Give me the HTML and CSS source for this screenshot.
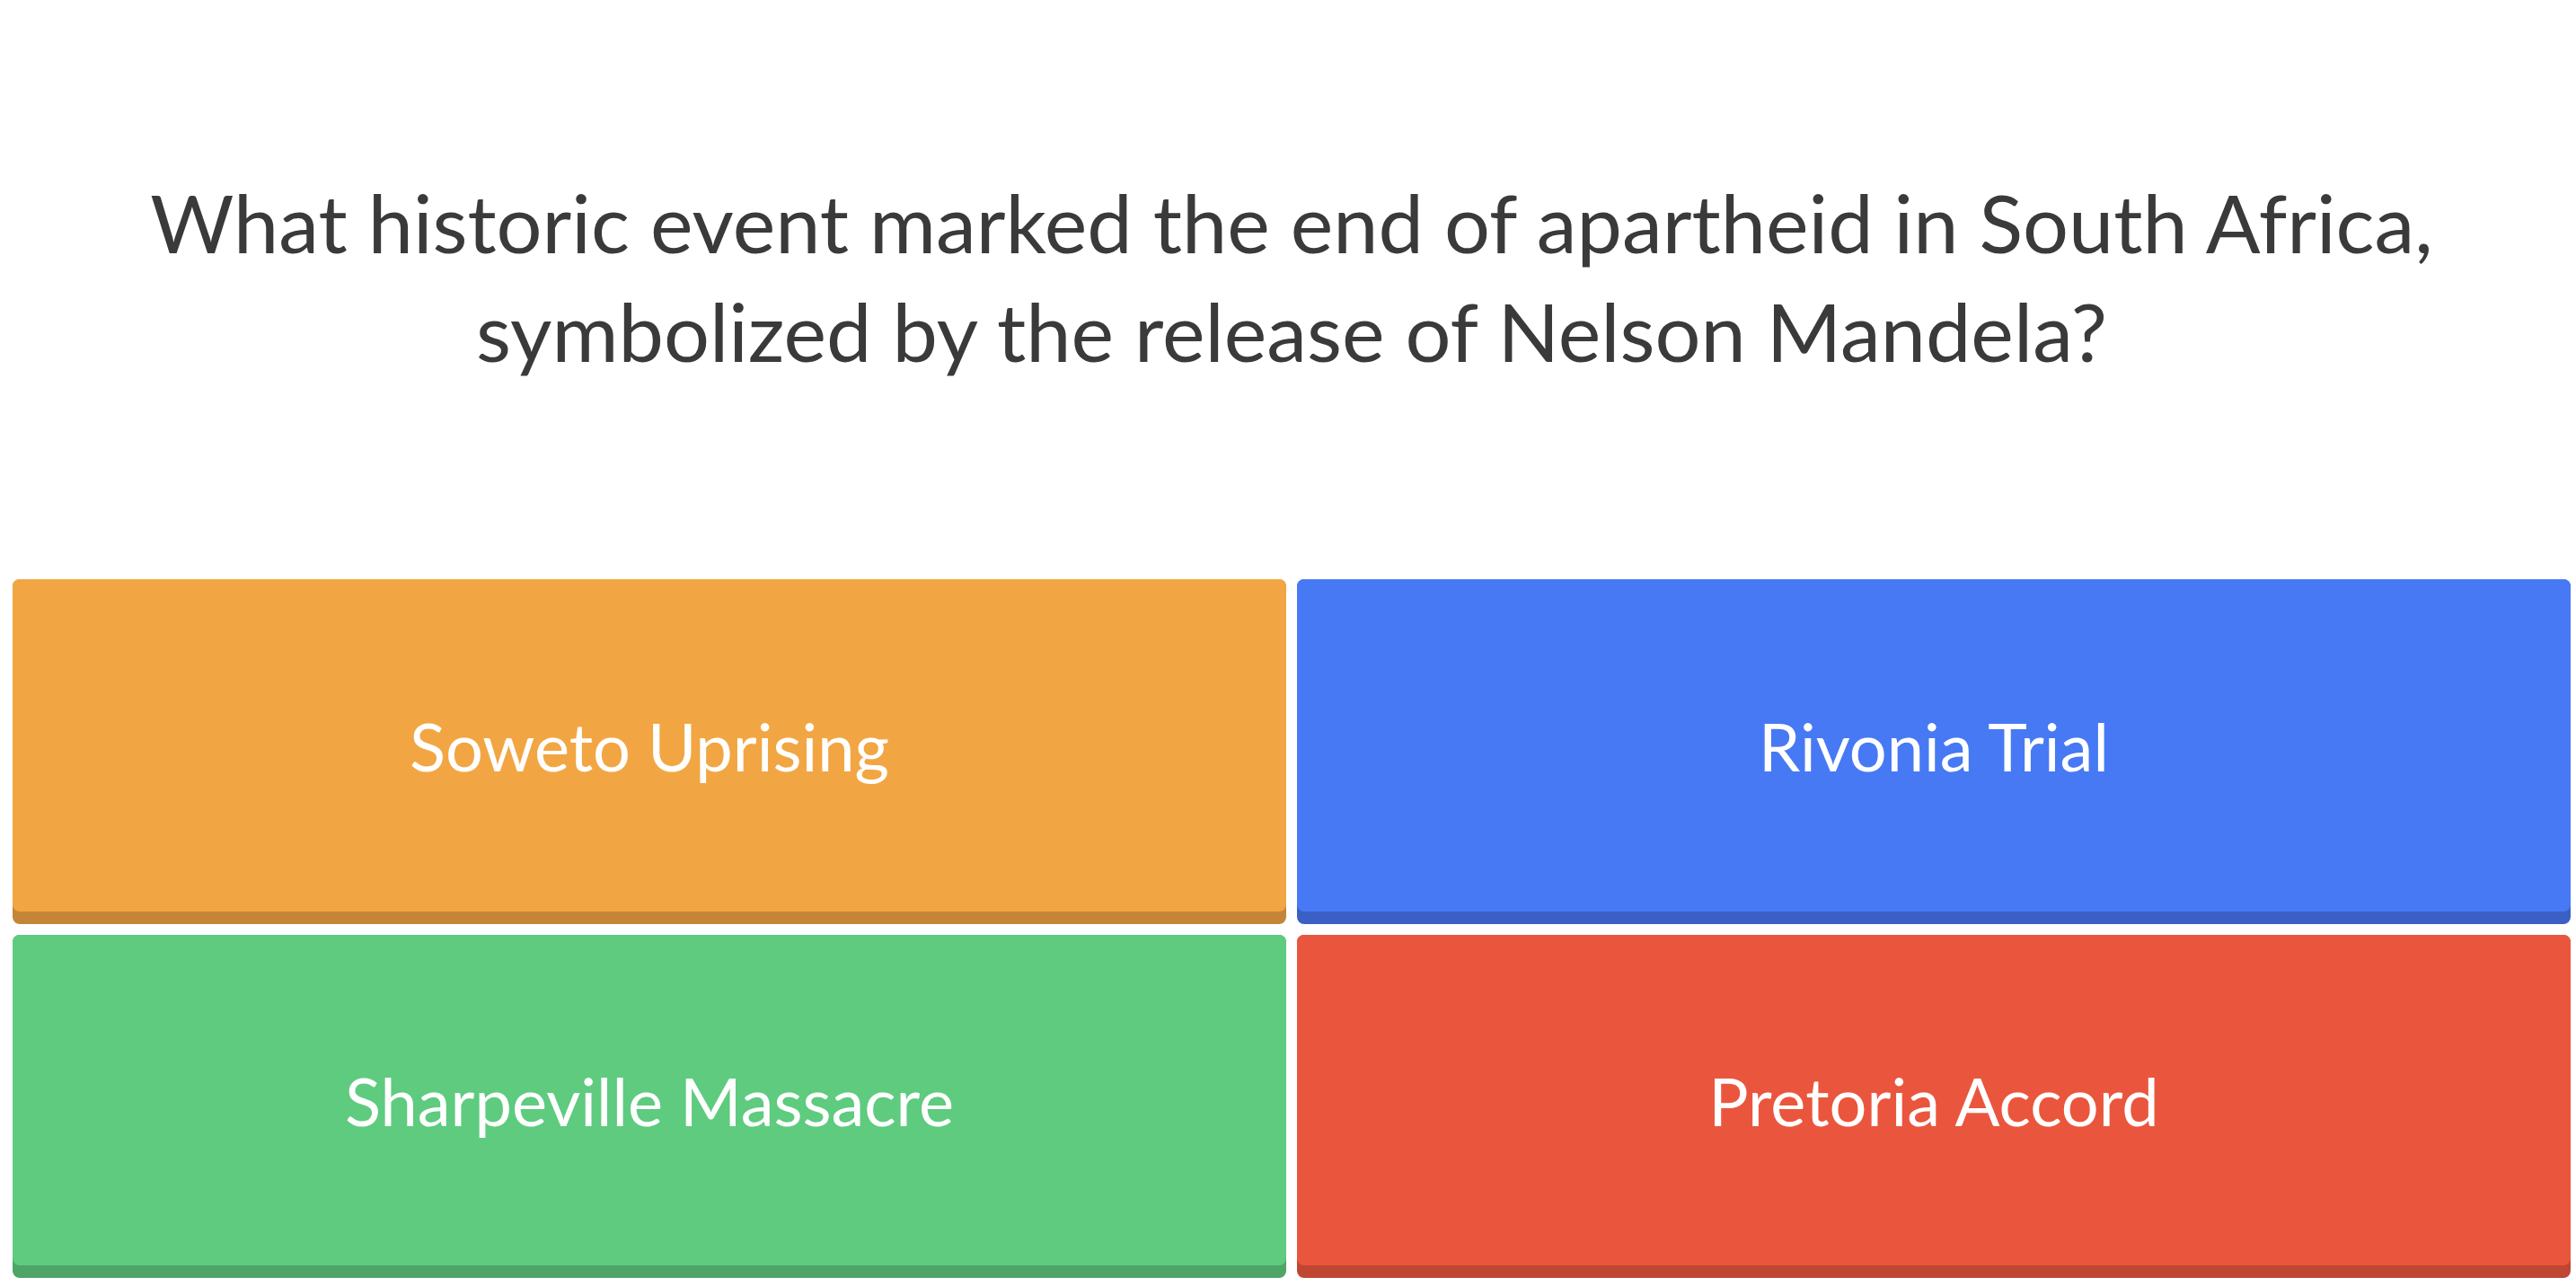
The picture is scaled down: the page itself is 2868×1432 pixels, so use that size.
FILE: index.html
```html
<!DOCTYPE html>
<html lang="en">
<head>
<meta charset="utf-8">
<title>Quiz</title>
<link rel="stylesheet" href="styles.css">
</head>
<body>
<div class="page">
  <header class="question">
    <h1 class="question-text">What historic event marked the end of apartheid in South Africa,<br>symbolized by the release of Nelson Mandela?</h1>
  </header>
  <main class="answers">
    <button class="answer orange"><span class="face">Soweto Uprising</span></button>
    <button class="answer blue"><span class="face">Rivonia Trial</span></button>
    <button class="answer green"><span class="face">Sharpeville Massacre</span></button>
    <button class="answer red"><span class="face">Pretoria Accord</span></button>
  </main>
</div>
</body>
</html>
```

FILE: styles.css
```css
* { box-sizing: border-box; }
html, body {
  margin: 0;
  padding: 0;
  background: #ffffff;
}
body {
  font-family: "Lato", "Noto Sans", sans-serif;
  width: 2868px;
  height: 1432px;
  overflow: hidden;
}
.page {
  height: 1432px;
  padding: 0 6px 9px 14px;
  display: grid;
  grid-template-rows: 645px 1fr;
}
.question {
  display: flex;
  align-items: center;
  justify-content: center;
  padding-bottom: 30px;
}
.question-text {
  margin: 0;
  font-weight: 400;
  font-size: 90px;
  line-height: 121px;
  color: #3a3a3a;
  text-align: center;
}
.answers {
  display: grid;
  grid-template-columns: 1fr 1fr;
  grid-template-rows: 384px 1fr;
  gap: 12px;
}
.answer {
  border: 0;
  margin: 0;
  padding: 0 0 14px 0;
  border-radius: 8px;
  display: flex;
  font-family: inherit;
  cursor: pointer;
}
.face {
  flex: 1;
  border-radius: 8px;
  display: flex;
  align-items: center;
  justify-content: center;
  color: #ffffff;
  font-size: 74px;
  font-weight: 400;
}
.orange { background: #c48538; }
.orange .face { background: #f2a643; }
.blue { background: #3a5fc5; }
.blue .face { background: #4779f4; }
.green { background: #4fa468; }
.green .face { background: #5ecb7f; }
.red { background: #be4632; }
.red .face { background: #ea563d; }
```
